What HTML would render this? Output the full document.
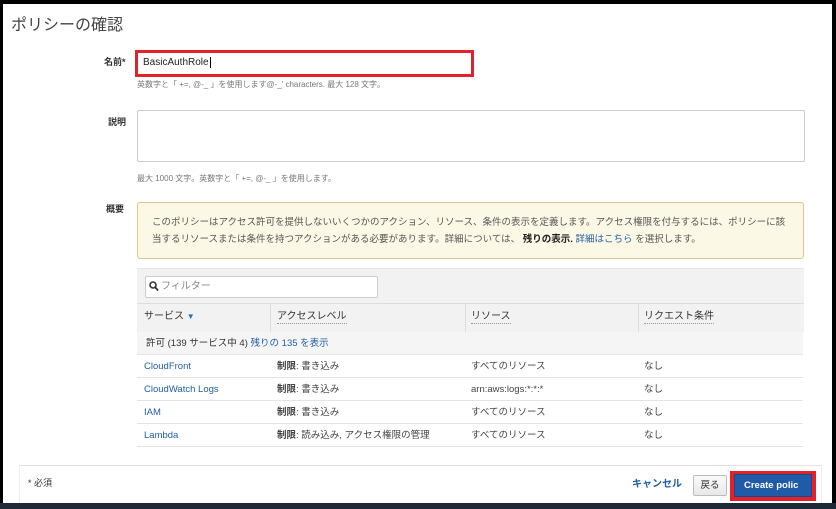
<!DOCTYPE html>
<html><head><meta charset="utf-8"><style>
*{margin:0;padding:0;box-sizing:border-box}
body{width:836px;height:509px;background:#000;position:relative;overflow:hidden;font-family:"Liberation Sans","Noto Sans CJK JP",sans-serif;color:#333}
.a{position:absolute;white-space:nowrap;line-height:12px}
.panel{position:absolute;left:3px;top:4px;width:829px;height:500px;background:#fff}
.lbl{font-size:9px;font-weight:bold;color:#333}
.help{font-size:8px;color:#777}
.th{font-size:10px;color:#333}
.td{font-size:9.5px;color:#444}
.link{color:#1f5fa6 !important}
.row{position:absolute;left:137px;width:666px;border-bottom:1px solid #e4e4e4;height:23px}
</style></head><body>
<div class="panel"></div>
<div class="a" style="left:11px;top:16px;font-size:16px;line-height:20px;color:#444">ポリシーの確認</div>
<div class="a lbl" style="left:104px;top:56px">名前*</div>
<div class="a" style="left:135px;top:50px;width:339px;height:27px;border:3px solid #e5202a;background:#fff"></div>
<div class="a" style="left:143px;top:57px;font-size:10px;color:#222">BasicAuthRole<span style="border-left:1px solid #000;margin-left:1px"></span></div>
<div class="a help" style="left:137px;top:79px">英数字と「 +=, @-_ 」を使用します@-_' characters. 最大 128 文字。</div>
<div class="a lbl" style="left:108px;top:116px">説明</div>
<div class="a" style="left:137px;top:110px;width:668px;height:52px;border:1px solid #ccc;border-radius:2px"></div>
<div class="a help" style="left:137px;top:173px">最大 1000 文字。英数字と「 +=, @-_ 」を使用します。</div>
<div class="a lbl" style="left:106px;top:203px">概要</div>
<div class="a" style="left:137px;top:202px;width:667px;height:57px;background:#fcf8e6;border:1px solid #dcc88e;border-radius:3px"></div>
<div class="a" style="left:152px;top:214px;font-size:9.5px;color:#555;line-height:17px">このポリシーはアクセス許可を提供しないいくつかのアクション、リソース、条件の表示を定義します。アクセス権限を付与するには、ポリシーに該<br>当するリソースまたは条件を持つアクションがある必要があります。詳細については、 <b style="color:#222">残りの表示.</b> <span class="link">詳細はこちら</span> を選択します。</div>
<div class="a" style="left:137px;top:268px;width:667px;height:64px;background:#f2f2f2;border-top:1px solid #e6e6e6"></div>
<div class="a" style="left:145px;top:276px;width:233px;height:22px;background:#fff;border:1px solid #ccc;border-radius:2px"></div>
<svg class="a" style="left:149px;top:281px" width="10" height="11" viewBox="0 0 10 11"><circle cx="4" cy="4" r="3" fill="none" stroke="#333" stroke-width="1.6"/><path d="M6 6l3 3.5" stroke="#333" stroke-width="1.8"/></svg>
<div class="a" style="left:161px;top:281px;font-size:10px;color:#888">フィルター</div>
<div class="a" style="left:137px;top:303px;width:667px;height:29px;border-top:1px solid #ddd"></div>
<div class="a" style="left:270px;top:303px;width:1px;height:29px;background:#ddd"></div>
<div class="a" style="left:465px;top:303px;width:1px;height:29px;background:#ddd"></div>
<div class="a" style="left:638px;top:303px;width:1px;height:29px;background:#ddd"></div>
<div class="a th" style="left:144px;top:311px">サービス <span style="color:#1f72c4;font-size:8px">▼</span></div>
<div class="a th" style="left:277px;top:311px;border-bottom:1px dotted #999">アクセスレベル</div>
<div class="a th" style="left:471px;top:311px;border-bottom:1px dotted #999">リソース</div>
<div class="a th" style="left:644px;top:311px;border-bottom:1px dotted #999">リクエスト条件</div>
<div class="row" style="top:332px;background:#f5f5f5"></div>
<div class="a td" style="left:146px;top:338px;color:#333">許可 (139 サービス中 4) <span class="link">残りの 135 を表示</span></div>
<div class="row" style="top:355px"></div><div class="row" style="top:378px"></div><div class="row" style="top:401px"></div><div class="row" style="top:424px"></div>
<div class="a td link" style="left:144px;top:361px">CloudFront</div>
<div class="a td" style="left:277px;top:361px"><b>制限</b>: 書き込み</div>
<div class="a td" style="left:471px;top:361px">すべてのリソース</div>
<div class="a td" style="left:644px;top:361px">なし</div>
<div class="a td link" style="left:144px;top:384px">CloudWatch Logs</div>
<div class="a td" style="left:277px;top:384px"><b>制限</b>: 書き込み</div>
<div class="a td" style="left:471px;top:384px">arn:aws:logs:*:*:*</div>
<div class="a td" style="left:644px;top:384px">なし</div>
<div class="a td link" style="left:144px;top:407px">IAM</div>
<div class="a td" style="left:277px;top:407px"><b>制限</b>: 書き込み</div>
<div class="a td" style="left:471px;top:407px">すべてのリソース</div>
<div class="a td" style="left:644px;top:407px">なし</div>
<div class="a td link" style="left:144px;top:430px">Lambda</div>
<div class="a td" style="left:277px;top:430px"><b>制限</b>: 読み込み, アクセス権限の管理</div>
<div class="a td" style="left:471px;top:430px">すべてのリソース</div>
<div class="a td" style="left:644px;top:430px">なし</div>
<div class="a" style="left:19px;top:465px;width:803px;height:40px;border-top:1px solid #e2e2e2;border-left:1px solid #eee;border-right:1px solid #eee"></div>
<div class="a" style="left:28px;top:477px;font-size:9px;color:#333">* 必須</div>
<div class="a" style="left:632px;top:479px;font-size:10px;font-weight:bold;color:#1f5fa6">キャンセル</div>
<div class="a" style="left:693px;top:475px;width:34px;height:21px;border:1px solid #bbb;border-radius:2px;background:linear-gradient(#fafafa,#e8e8e8);font-size:9.5px;text-align:center;line-height:19px">戻る</div>
<div class="a" style="left:730px;top:471px;width:86px;height:30px;background:#e5202a"></div>
<div class="a" style="left:734px;top:474px;width:78px;height:23px;background:#1f5ba6;border:1px solid #174a8c;color:#fff;font-size:9.5px;font-weight:bold;line-height:21px;padding-left:9px">Create polic</div>
<div class="a" style="left:0;top:503px;width:836px;height:6px;background:#1f2a38"></div>
</body></html>
